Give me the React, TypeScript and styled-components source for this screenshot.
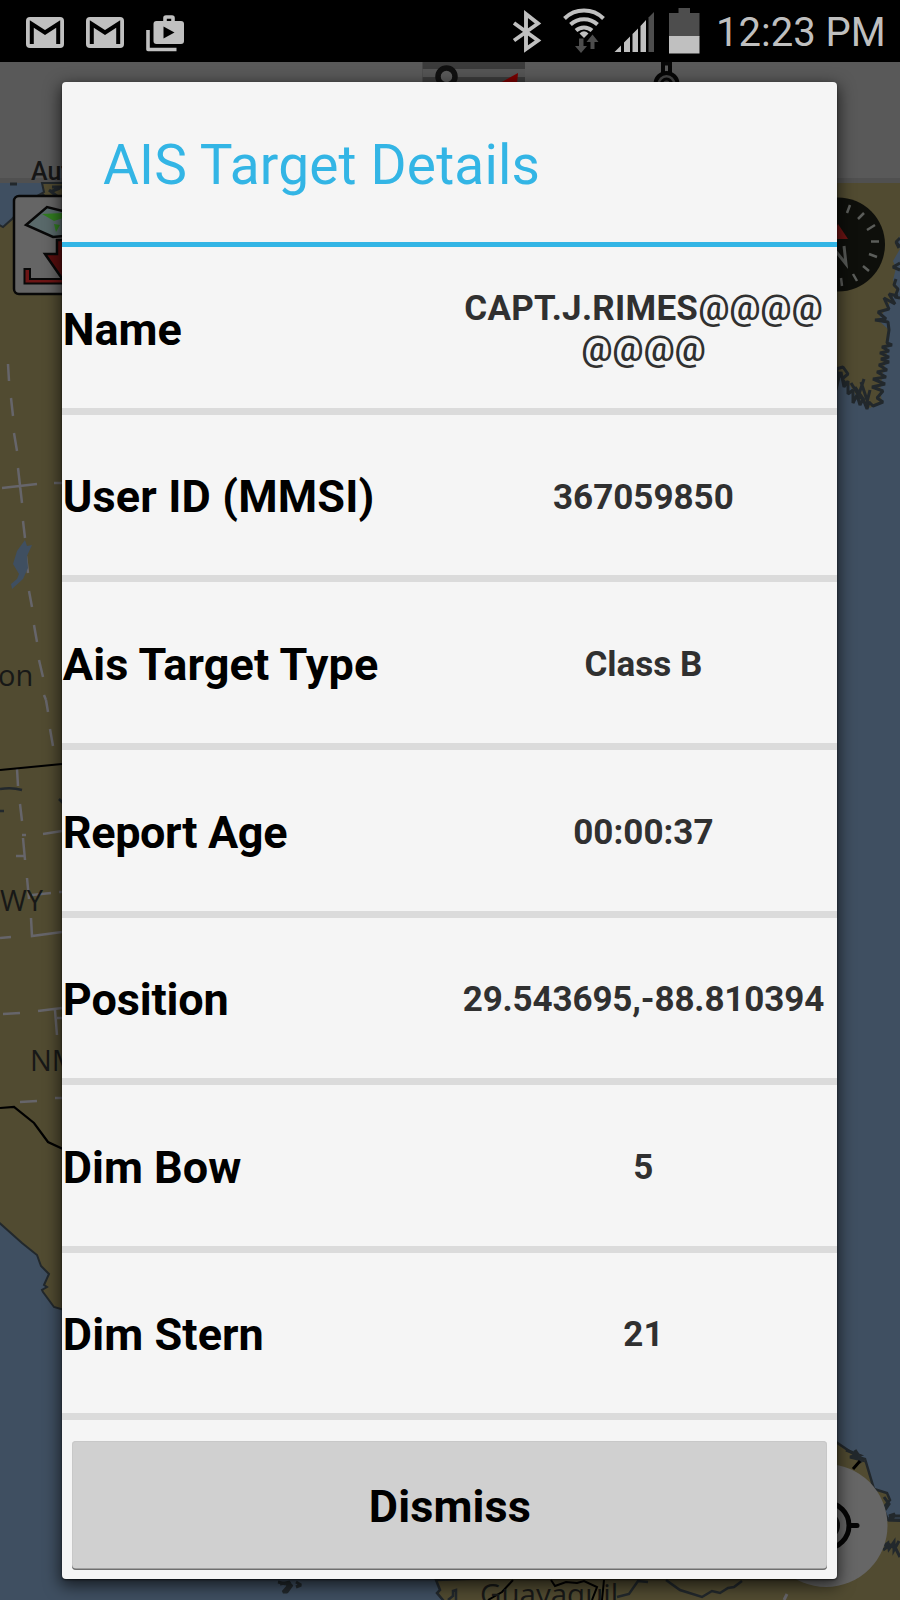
import React from 'react';
import styled, { createGlobalStyle } from 'styled-components';

const Global = createGlobalStyle`
  * { box-sizing: border-box; }
  body { margin: 0; background: #000; font-family: Roboto, sans-serif; }
`;

const Screen = styled.div`
  position: relative;
  width: 900px;
  height: 1600px;
  overflow: hidden;
  display: flex;
  flex-direction: column;
`;

const MapLayer = styled.svg`
  position: absolute;
  inset: 0;
  width: 900px;
  height: 1600px;
`;

const StatusBar = styled.header`
  position: relative;
  height: 62px;
  flex: none;
  background: #000;
  display: flex;
  justify-content: space-between;
`;

const StatusIcons = styled.svg<{ $w: number }>`
  width: ${(p) => p.$w}px;
  height: 62px;
  flex: none;
`;

const StatusRight = styled.div`
  display: flex;
`;

const Clock = styled.span`
  width: 184px;
  font-size: 40px;
  line-height: 65px;
  color: #bfbfbf;
  white-space: nowrap;
`;

const Dialog = styled.section`
  position: relative;
  margin: 20.4px 62.4px 0;
  width: 775px;
  height: 1497px;
  background: #f5f5f5;
  border-radius: 4px;
  box-shadow: 0 5px 16px 2px rgba(0, 0, 0, 0.62), 0 1px 2px rgba(0, 0, 0, 0.6);
  display: flex;
  flex-direction: column;
`;

const Title = styled.h1`
  margin: 0;
  height: 165px;
  flex: none;
  padding-left: 40.6px;
  border-bottom: 5px solid #33b5e5;
  color: #33b5e5;
  font-size: 55px;
  font-weight: 400;
  letter-spacing: 0.18px;
  line-height: 166px;
  white-space: nowrap;
`;

const Row = styled.div`
  height: 167.55px;
  flex: none;
  display: grid;
  grid-template-columns: 387px 1fr;
  align-items: center;
  border-bottom: 7.6px solid #dbdbdb;
`;

const Label = styled.span<{ $tracking: number }>`
  color: #000;
  font-size: 45px;
  font-weight: 700;
  letter-spacing: ${(p) => p.$tracking}px;
  line-height: 54px;
  white-space: nowrap;
  padding: 4.4px 0 0 0.4px;
`;

const Value = styled.span<{ $tracking: number }>`
  color: #303030;
  font-size: 35px;
  font-weight: 700;
  letter-spacing: ${(p) => p.$tracking}px;
  line-height: 41px;
  text-align: center;
  padding-top: 3.6px;
`;

const At = styled.span`
  font-weight: 500;
  letter-spacing: -0.3px;
`;

const Dismiss = styled.button`
  margin: 21px 10px 0;
  height: 129px;
  flex: none;
  border: 0;
  border-radius: 4px;
  background: #d0d0d0;
  box-shadow: inset 0 -1.5px 0 #6f6f6f, inset 0 0 0 1px #c8c8c8;
  font-family: inherit;
  font-size: 45px;
  font-weight: 700;
  letter-spacing: 0.1px;
  color: #000;
  padding: 2px 0 0;
`;

interface Detail {
  label: string;
  value: React.ReactNode;
  labelTracking?: number;
  valueTracking?: number;
}

const details: Detail[] = [
  {
    label: 'Name',
    value: <>CAPT.J.RIMES<At>@@@@</At><br /><At>@@@@</At></>,
    valueTracking: 0.25,
  },
  { label: 'User ID (MMSI)', value: '367059850', labelTracking: 0.15 },
  { label: 'Ais Target Type', value: 'Class B', labelTracking: 0.13 },
  { label: 'Report Age', value: '00:00:37', labelTracking: -0.38 },
  { label: 'Position', value: '29.543695,-88.810394', labelTracking: -0.12, valueTracking: -0.13 },
  { label: 'Dim Bow', value: '5' },
  { label: 'Dim Stern', value: '21', labelTracking: 0.1 },
];

const LAND = '#514b31';
const SEA = '#3f4f61';
const COAST = '#22282c';

const Chart = () => (
  <MapLayer viewBox="0 0 900 1600" fontFamily="Roboto, sans-serif">
    <rect width="900" height="1600" fill={SEA} />
    <rect y="62" width="900" height="118" fill="#595959" />
    <rect y="178" width="900" height="5" fill="#505050" />
    <text x="31" y="179.500" fontSize="25" fontWeight="500" fill="#161616">Auto</text>

    {/* toolbar pictograms */}
    <rect x="422.500" y="62" width="102.500" height="30" fill="#3b3b3b" />
    <rect x="422.500" y="69" width="102.500" height="8" fill="#555" />
    <circle cx="446.500" cy="76.500" r="8.500" fill="#5a5a5a" stroke="#101010" strokeWidth="5.500" />
    <path d="M498 84 L518 73 L517 84Z" fill="#7a0000" />
    <path d="M663 62 V73 M670 62 V73" stroke="#060606" strokeWidth="4" />
    <path d="M661 63 H672" stroke="#060606" strokeWidth="5" />
    <circle cx="666.500" cy="84" r="11" fill="#444" stroke="#060606" strokeWidth="4" />
    <circle cx="666.500" cy="84" r="5" fill="none" stroke="#060606" strokeWidth="3" />

    {/* western land mass */}
    <path d="M-6 222 L3 227 L12 219 L30 200 L44 192 L42 183 H64 V1310 L54 1307 L43 1292 L42 1290 L47 1287 L44 1285 L49 1274 L41 1266 L37 1255 L22 1243 L-6 1218Z" fill={LAND} stroke={COAST} strokeWidth="2" />
    <path d="M10 184 H17 M42 194 L48 200 M49 190 L62 200 M52 187 H62 M50 192 L60 188" fill="none" stroke={COAST} strokeWidth="3" />
    <g fill="none" stroke="#66656a" strokeWidth="2.500">
      <path d="M8 364 L9 381 M11 398 L13 416 M14 433 L17 451 M18 468 L22 503 M2 488 L37 484 M54 483 H62 M23 521 L25 538 M26 556 L28 573 M29 591 L32 607 M34 625 L37 642 M39 660 L43 677 M44 695 L46 700" />
      <path d="M46 700 L48 712 M50 729 L53 746 M17 769 L18 786 M20 804 L22 821 M23 838 L25 860 M16 856 H25 M22 835 H26 M27 878 L29 899 M32 895 L51 893 M43 834 L62 831 M59 892 H63 M31 918 L32 936 L62 932 M0 938 L11 937 M3 1014 L20 1013 M38 1011 L62 1008 M55 1010 L57 1035 M57 1018 H62 M20 1102 L37 1101 M55 1098 H62" />
    </g>
    <path d="M25 540 L27 546 L32 545 L27 556 L28 568 L23 579 L12 589 L11 584 L17 579 L19 574 L13 564 L17 551Z" fill={SEA} />
    <path d="M0 770 L62 764 M0 1108 L14 1107 L34 1123 L48 1142 L63 1149" fill="none" stroke="#000" strokeWidth="2.200" />
    <path d="M0 789 Q12 787 22 790 M0 811 H4 M59 799 L63 803" fill="none" stroke={COAST} strokeWidth="2.500" />
    <g fill="#171817" fontSize="29" fontFamily="Open Sans, sans-serif">
      <text x="-2" y="686">on</text>
      <text x="0" y="911">WY</text>
      <text x="30" y="1071">NM</text>
    </g>

    {/* download tile */}
    <rect x="14" y="196" width="100" height="98" rx="5" fill="#656565" stroke="#080808" strokeWidth="2.500" />
    <path d="M26 225 L47 207 L75 214 V235 L53 237Z" fill="#59696a" stroke="#080808" strokeWidth="2.500" />
    <path d="M42 214 L63 213 V218 L54 221 L49 218Z M54 224 L60 225 L56 232Z" fill="#317c20" />
    <path d="M57 240 H70 V290 L45 254 H57Z" fill="#590e0e" stroke="#080808" strokeWidth="2.500" />
    <path d="M24.500 269 H30 V279 H80 V283.500 H24.500Z" fill="#6c1515" stroke="#080808" strokeWidth="2" />

    {/* eastern coast */}
    <path d="M830 183 H900 V236 L896 243 L900 249 L893 261 L896 268 L893 280 L898 288 L888 306 L878 320 L889 330 L886 360 L883 372 L880 390 L882 402 L870 408 L858 398 L850 386 L838 374 L830 368Z" fill={LAND} />
    <path d="M900 238 L896 242 L900 247 M896 242 L899 248 M900 263 L893 267 L900 270 M896 279 L894 285 L898 289 L895 297 L900 298 M898 296 L889 294 L895 304 L884 298 L889 309 L878 312 L886 319 L875 320 L888 322 L889 330 L887 343 L892 345 L882 347 L889 351 L880 353 L889 357 L881 359 L889 362 L879 365 L887 370 L877 372 L886 377 L873 379 L885 384 L872 387 L883 391 L877 398 L883 402 L873 406 L869 402 L867 409 L863 399 L860 405 L857 395 L853 403 L853 390 L848 394 L848 381 L844 387 L841 372 L837 382 L836 369 L843 367 L848 374 L842 379 L846 384" fill="none" stroke={COAST} strokeWidth="3" strokeLinejoin="bevel" />
    <path d="M855 387 L864 400 M861 382 L867 400 M870 390 L866 406 M864 379 L858 397 M851 383 L861 399 M837 367 V386 M840 372 L836 390" stroke={COAST} strokeWidth="3" />

    {/* compass */}
    <circle cx="838" cy="244.500" r="47" fill="#0e0f0b" />
    <path d="M838 224 L848 239 H830Z" fill="#6e1413" />
    <path d="M834 249 L846 264 L844 246" fill="none" stroke="#595b58" strokeWidth="3" />
    <path d="M850 205 L847 213 M864 213 L858 219 M875 225 L867 230 M879 241.500 H871 M877 257 L869 254 M869 271 L863 266 M857 281 L853 274 M842 286 L841 278" stroke="#5b5d5a" strokeWidth="2.500" />

    {/* southern land mass */}
    <path d="M836 1442 L858 1457 L865 1459 L874 1489 L887 1493 L890 1500 L883 1508 L888 1520 L906 1521 V1606 H448 L437 1593 L440 1590 L436 1580 L700 1570Z" fill={LAND} stroke={COAST} strokeWidth="2.500" />
    <path d="M846 1450 L859 1455 L850 1457 L862 1460 L855 1450 L861 1463 M884 1497 L889 1504 L885 1510 M889 1519 L895 1514 L889 1516 L900 1516 M895 1515 L891 1520 H900 M884 1546 L888 1543 L889 1549 L894 1542 L894 1550 L899 1541 M883 1550 L890 1545 L896 1549 L900 1557" fill="none" stroke={COAST} strokeWidth="3" />
    <path d="M853 1469 L860 1461" stroke="#000" strokeWidth="3" />
    <path d="M278 1582 L286 1584 M280 1584 L290 1582 L287 1586 L292 1585 L287 1592 H283 L290 1584 M296 1582 L301 1585 L296 1587" fill="none" stroke={COAST} strokeWidth="3" strokeLinejoin="bevel" />
    <path d="M513 1580 L502 1592 L488 1600 M551 1580 L555 1586 L566 1582 L577 1583 L584 1581 L597 1587 L592 1600 M604 1580 L602 1600" fill="none" stroke="#000" strokeWidth="2" />
    <path d="M617 1597 L629 1594 L638 1581 L648 1582 M666 1580 L680 1590 L702 1597 L712 1591 L720 1593 L728 1588 L734 1587 L742 1581 M448 1600 L453 1596 V1591 L456 1590 V1600" fill="none" stroke={COAST} strokeWidth="2.500" />
    <path d="M784 1600 L787 1594" stroke="#66656a" strokeWidth="3" />
    <text x="480" y="1604.500" fontSize="29.500" fontFamily="Open Sans, sans-serif" fill="#171817">Guayaquil</text>
    <circle cx="826" cy="1525.500" r="61.500" fill="#666" />
    <circle cx="826" cy="1525.500" r="23" fill="none" stroke="#050505" strokeWidth="5" />
    <circle cx="826" cy="1525.500" r="14" fill="#111" />
    <path d="M850 1525.500 H857" stroke="#050505" strokeWidth="5" strokeLinecap="round" />
  </MapLayer>
);

const Notifications = () => (
  <StatusIcons $w={200} viewBox="0 0 200 62">
    {[26, 86].map((x) => (
      <g key={x} transform={`translate(${x} 17)`}>
        <rect width="38" height="31" rx="4" fill="#c0c0c0" />
        <path d="M5.800 27 V7 L19 15.500 L32.200 7 V27" fill="none" stroke="#000" strokeWidth="4" />
      </g>
    ))}
    <path d="M148 30 V49.500 H176.500" fill="none" stroke="#c0c0c0" strokeWidth="3.600" strokeLinejoin="round" />
    <path d="M165 22 V18 Q165 17 166 17 H172 Q173 17 173 18 V22" fill="none" stroke="#c0c0c0" strokeWidth="3.600" />
    <rect x="153.500" y="21" width="30.500" height="23" rx="3" fill="#c0c0c0" />
    <path d="M163.500 26.500 V38.500 L174.500 32.500Z" fill="#000" />
  </StatusIcons>
);

const Radios = () => (
  <StatusIcons $w={204} viewBox="512 0 204 62">
    <path d="M514 23 L538 40.500 L526 49 V14 L538 23.500 L514 40.500" fill="none" stroke="#c0c0c0" strokeWidth="3.900" />
    <g fill="none" stroke="#c0c0c0" strokeWidth="4">
      <path d="M564.500 18.500 A28 28 0 0 1 603.500 18.500" />
      <path d="M570.500 24.500 A20 20 0 0 1 597.500 24.500" />
      <path d="M576 30.500 A12 12 0 0 1 592 30.500" />
    </g>
    <path d="M579.500 33.500 Q584 29 588.500 33.500 L584 38Z" fill="#c0c0c0" />
    <path d="M579 38.500 H583.500 V46 H587 L581 53 L575 46 H579Z M590.500 49 V42 H586.500 L592.500 34.500 L598.500 42 H594.500 V49Z" fill="#4d4d4d" />
    <path d="M614.500 52 L621 45.500 V52Z M624 52 V42.500 L630 36.500 V52Z M632.500 52 V34 L638 28.500 V52Z M640.500 52 V26 L646 20 V52Z" fill="#c0c0c0" />
    <path d="M648.500 52 V17.500 L654 12 V52Z" fill="#4d4d4d" />
    <path d="M669 36.500 V13 H678.500 V8 H690 V13 H699.500 V36.500Z" fill="#4d4d4d" />
    <rect x="669" y="36" width="30.500" height="17.500" fill="#c0c0c0" />
  </StatusIcons>
);

export default function App() {
  return (
    <Screen>
      <Global />
      <Chart />
      <StatusBar>
        <Notifications />
        <StatusRight>
          <Radios />
          <Clock>12:23 PM</Clock>
        </StatusRight>
      </StatusBar>
      <Dialog>
        <Title>AIS Target Details</Title>
        {details.map(({ label, value, labelTracking = 0, valueTracking = 0 }) => (
          <Row key={label}>
            <Label $tracking={labelTracking}>{label}</Label>
            <Value $tracking={valueTracking}>{value}</Value>
          </Row>
        ))}
        <Dismiss>Dismiss</Dismiss>
      </Dialog>
    </Screen>
  );
}
